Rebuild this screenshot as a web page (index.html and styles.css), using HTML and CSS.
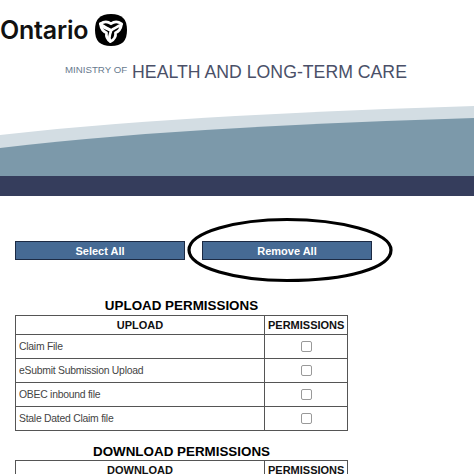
FILE: index.html
```html
<!DOCTYPE html>
<html lang="en">
<head>
<meta charset="utf-8">
<title>Permissions</title>
<link rel="stylesheet" href="styles.css">
</head>
<body>
<header class="masthead">
  <div class="brand">
    <span class="wordmark">Ontario</span>
    <svg class="trillium" viewBox="0 0 32 32" aria-hidden="true">
      <path class="tile" d="M16 0C27 0 32 5 32 16S27 32 16 32 0 27 0 16 5 0 16 0Z"/>
      <g transform="translate(16 16.5) scale(1.12) translate(-16 -16.5)">
        <path class="petal" d="M16 16.5C13 14 9.5 13.5 6.5 10.5 9.5 8.5 13 8.2 16 10.5 19 8.2 22.5 8.5 25.5 10.5 22.5 13.5 19 14 16 16.5Z"/>
        <path class="petal" d="M16 16.5C15.5 20.5 13 22 15.5 26.5 19 24.5 20.5 21.5 20 18.5 23 17.5 25 14 25.5 10.5"/>
        <path class="petal" d="M16 16.5C12 15 10.5 15 6.5 10.5 7 14 9 17.5 12 18.5 11.5 21.5 12.5 24.5 15.5 26.5"/>
      </g>
    </svg>
  </div>
  <div class="ministry">
    <span class="ministry-of">MINISTRY OF</span>
    <span class="ministry-name">HEALTH AND LONG-TERM CARE</span>
  </div>
  <svg class="swoosh" viewBox="0 0 474 109" preserveAspectRatio="none" aria-hidden="true">
    <path class="swoosh-light" d="M0 47C150 30 320 23 474 18V60H0Z"/>
    <path class="swoosh-mid" d="M0 60C150 42 320 35 474 30V88H0Z"/>
    <rect class="swoosh-dark" x="0" y="88" width="474" height="20"/>
  </svg>
</header>
<main class="content">
  <div class="actions">
    <button class="action" type="button">Select All</button>
    <div class="circled">
      <button class="action" type="button">Remove All</button>
      <svg class="ring" viewBox="0 0 206 66" aria-hidden="true">
        <path d="M100 1.5C152 1.5 204 14 204 32 204 50 160 62.5 100 62.5 50 62.5 2 50 2 32 2 14 50 1.5 100 1.5Z"/>
      </svg>
    </div>
  </div>
  <h2 class="section-title">UPLOAD PERMISSIONS</h2>
  <table class="perm">
    <thead><tr><th>UPLOAD</th><th class="col-check">PERMISSIONS</th></tr></thead>
    <tbody>
      <tr><td>Claim File</td><td class="col-check"><span class="box"></span></td></tr>
      <tr><td>eSubmit Submission Upload</td><td class="col-check"><span class="box"></span></td></tr>
      <tr><td>OBEC inbound file</td><td class="col-check"><span class="box"></span></td></tr>
      <tr><td>Stale Dated Claim file</td><td class="col-check"><span class="box"></span></td></tr>
    </tbody>
  </table>
  <h2 class="section-title second">DOWNLOAD PERMISSIONS</h2>
  <table class="perm">
    <thead><tr><th>DOWNLOAD</th><th class="col-check">PERMISSIONS</th></tr></thead>
  </table>
</main>
</body>
</html>
```
FILE: styles.css
```css
html, body { margin: 0; padding: 0; background: #fff; overflow: hidden; height: 474px; }
body { font-family: "Liberation Sans", Arial, sans-serif; color: #000; }

.masthead { display: block; }
.brand { display: flex; align-items: center; gap: 7px; padding-top: 14px; height: 32px; }
.wordmark { font-family: Inter, "Liberation Sans", sans-serif; font-weight: 600; font-size: 25px; letter-spacing: -0.2px; line-height: 32px; color: #111; width: 88px; }
.trillium { width: 32px; height: 32px; display: block; }
.tile { fill: #000; }
.petal { fill: none; stroke: #fff; stroke-width: 2.4; stroke-linejoin: round; }

.ministry { display: flex; align-items: center; gap: 5px; padding-left: 65px; height: 24px; margin-top: 14px; }
.ministry-of { font-size: 9.7px; color: #67798e; margin-bottom: 5px; }
.ministry-name { font-size: 17.7px; line-height: 24px; color: #4a5068; }

.swoosh { display: block; width: 474px; height: 109px; margin-top: 4px; }
.swoosh-light { fill: #d3dde3; }
.swoosh-mid { fill: #7c99aa; }
.swoosh-dark { fill: #353d5c; }

.content { padding: 44px 0 0 15px; }
.actions { display: flex; gap: 17px; }
.action { display: block; width: 170px; height: 19px; padding: 0; border: 1px solid #1c2a44; background: #466a94; color: #fff; font: bold 11px "Liberation Sans", Arial, sans-serif; }
.circled { position: relative; }
.ring { position: absolute; left: -15px; top: -23px; width: 206px; height: 66px; overflow: visible; pointer-events: none; }
.ring path { fill: none; stroke: #000; stroke-width: 3.2; }

.section-title { width: 333px; margin: 38px 0 0; font-size: 13.4px; line-height: 16px; text-align: center; font-weight: bold; color: #000; }
.section-title.second { margin-top: 13px; }
.perm { width: 333px; border-collapse: collapse; table-layout: fixed; margin-top: 1px; border: 1px solid #555; }
.section-title.second + .perm { margin-top: 0; }
.perm th, .perm td { border: 1px solid #555; height: 23px; padding: 0 3px; font-size: 10.4px; letter-spacing: -0.25px; color: #444; text-align: left; }
.perm th { height: 17px; padding-bottom: 1px; font-size: 11px; letter-spacing: 0; color: #111; text-align: center; }
.col-check { width: 76px; text-align: center !important; }
.box { display: block; width: 9px; height: 9px; margin: 0 auto; border: 1px solid #999; border-radius: 2px; background: #fff; }
```
